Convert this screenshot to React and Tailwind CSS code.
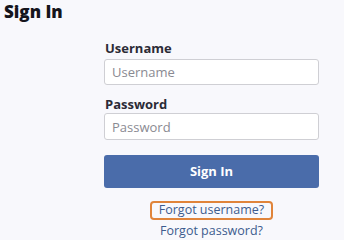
import React from "react";

export default function App() {
  return (
    <div
      className="w-[344px] h-[240px] overflow-hidden bg-[#f8f8fc] text-[#23232f]"
      style={{ fontFamily: '"Open Sans", "Noto Sans", sans-serif' }}
    >
      <h1 className="h-[24px] pl-[4px] pt-[1px] text-[17px] leading-[22px] font-extrabold text-[#15151c]">
        Sign In
      </h1>

      <form className="ml-[104px] w-[215px] pt-[16px] flex flex-col">
        <label className="h-[16px] pl-[1px] text-[13px] leading-[16px] font-bold text-[#2b2b36]">
          Username
        </label>
        <input
          type="text"
          placeholder="Username"
          className="mt-[3px] h-[26px] w-full rounded-[3px] border border-[#cfcfd4] bg-white px-[7px] text-[13px] outline-none placeholder:text-[#8a8a92]"
        />

        <label className="mt-[11px] h-[16px] pl-[1px] text-[13px] leading-[16px] font-bold text-[#2b2b36]">
          Password
        </label>
        <input
          type="password"
          placeholder="Password"
          className="mt-[1px] h-[27px] w-full rounded-[3px] border border-[#cfcfd4] bg-white px-[7px] text-[13px] outline-none placeholder:text-[#8a8a92]"
        />

        <button
          type="button"
          className="mt-[15px] h-[33px] w-full rounded-[3px] bg-[#4a6caa] text-[13px] font-bold text-white"
        >
          Sign In
        </button>

        <div className="mt-[13px] flex justify-center">
          <a className="flex h-[19px] w-[123px] items-center justify-center rounded-[4px] border-2 border-[#e0843a] text-[12.5px] leading-none text-[#3d5c8e]">
            Forgot username?
          </a>
        </div>
        <div className="mt-[3px] flex justify-center">
          <a className="text-[12.5px] leading-[16px] text-[#3d5c8e]">
            Forgot password?
          </a>
        </div>
      </form>
    </div>
  );
}
